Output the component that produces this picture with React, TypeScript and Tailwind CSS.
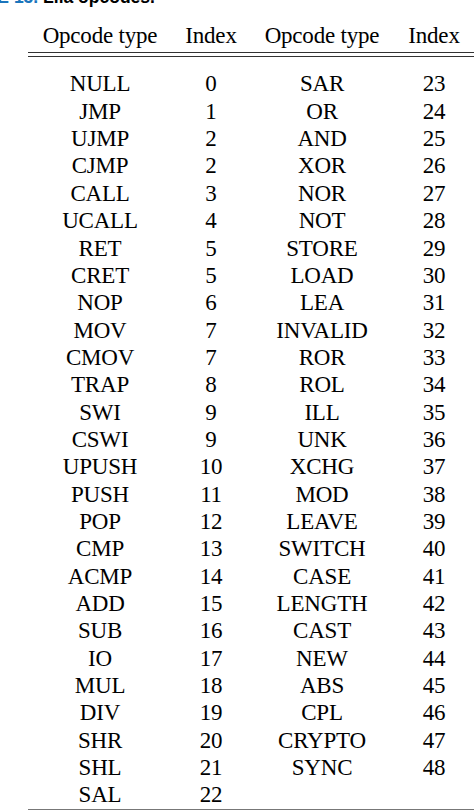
const rows: [string, string, string, string][] = [
  ['NULL', '0', 'SAR', '23'],
  ['JMP', '1', 'OR', '24'],
  ['UJMP', '2', 'AND', '25'],
  ['CJMP', '2', 'XOR', '26'],
  ['CALL', '3', 'NOR', '27'],
  ['UCALL', '4', 'NOT', '28'],
  ['RET', '5', 'STORE', '29'],
  ['CRET', '5', 'LOAD', '30'],
  ['NOP', '6', 'LEA', '31'],
  ['MOV', '7', 'INVALID', '32'],
  ['CMOV', '7', 'ROR', '33'],
  ['TRAP', '8', 'ROL', '34'],
  ['SWI', '9', 'ILL', '35'],
  ['CSWI', '9', 'UNK', '36'],
  ['UPUSH', '10', 'XCHG', '37'],
  ['PUSH', '11', 'MOD', '38'],
  ['POP', '12', 'LEAVE', '39'],
  ['CMP', '13', 'SWITCH', '40'],
  ['ACMP', '14', 'CASE', '41'],
  ['ADD', '15', 'LENGTH', '42'],
  ['SUB', '16', 'CAST', '43'],
  ['IO', '17', 'NEW', '44'],
  ['MUL', '18', 'ABS', '45'],
  ['DIV', '19', 'CPL', '46'],
  ['SHR', '20', 'CRYPTO', '47'],
  ['SHL', '21', 'SYNC', '48'],
  ['SAL', '22', '', ''],
];

const cols = 'grid grid-cols-[144px_78px_144px_80px]';

export default function App() {
  return (
    <div className="w-[474px] h-[810px] overflow-hidden bg-white text-black">
      {/* caption, cut off at the top of the shot */}
      <div className="h-[8px] overflow-hidden">
        <div className="ml-[-48px] mt-[-11px] whitespace-nowrap text-[17.5px] font-bold leading-none" style={{ fontFamily: '"Liberation Sans", Arial, sans-serif' }}>
          <span className="text-[#1b75bc]">TABLE 13. </span>
          <span>Lila opcodes.</span>
        </div>
      </div>

      <div className="ml-[28px] w-[446px] text-[23px] tracking-[-0.2px]" style={{ fontFamily: '"Liberation Serif", "Times New Roman", serif' }}>
        <div className={`${cols} h-[41px] items-end pb-[2px] text-center leading-none`}>
          <div>Opcode type</div>
          <div>Index</div>
          <div>Opcode type</div>
          <div>Index</div>
        </div>
        <div className="h-[3px]" />
        <div className="h-[1.3px] bg-[#333]" />
        <div className="h-[2.7px]" />
        <div className="h-[1.3px] bg-[#333]" />

        <div className="pt-[13px]">
          {rows.map((r, i) => (
            <div key={i} className={`${cols} h-[27.35px] items-center text-center leading-none`}>
              <div>{r[0]}</div>
              <div>{r[1]}</div>
              <div>{r[2]}</div>
              <div>{r[3]}</div>
            </div>
          ))}
        </div>
        <div className="h-[3px] bg-[#777]" />
      </div>
    </div>
  );
}
